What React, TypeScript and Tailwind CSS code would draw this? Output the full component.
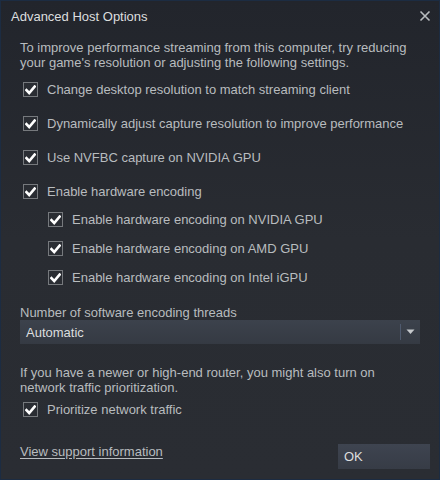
import React from 'react';

const Check = ({ label }: { label: string }) => (
  <div className="flex h-[15px] items-center gap-[9px]">
    <span className="flex h-[15px] w-[15px] shrink-0 items-center justify-center border border-[#76797d] bg-[#2a2d33]">
      <svg width="11" height="10" viewBox="0 0 11 10">
        <path d="M1.5 5.2 L4.2 8 L9.6 1.6" fill="none" stroke="#ffffff" strokeWidth="2.6" strokeLinecap="square" />
      </svg>
    </span>
    <span>{label}</span>
  </div>
);

const App = () => {
  return (
    <div
      className="flex h-[480px] w-[440px] flex-col overflow-hidden border border-[#1c2c42] bg-gradient-to-b from-[#22252c] via-[#292c32] to-[#2a2d33] text-[13px] leading-[15px] text-[#b8bcbf]"
      style={{ fontFamily: '"Liberation Sans", Arial, sans-serif' }}
    >
      <div className="flex h-[30px] shrink-0 items-center justify-between pl-[10px] pr-[8px]">
        <span className="text-[13px] text-[#dcdedf]">Advanced Host Options</span>
        <svg width="12" height="12" viewBox="0 0 12 12">
          <path d="M1.5 1.5 L10.5 10.5 M10.5 1.5 L1.5 10.5" stroke="#b8bcbf" strokeWidth="1.6" />
        </svg>
      </div>

      <div className="flex flex-1 flex-col px-[19px] pt-[9px]">
        <p>
          To improve performance streaming from this computer, try reducing your game's resolution or adjusting the
          following settings.
        </p>

        <div className="mt-[12px] flex flex-col gap-[19px] pl-[3px]">
          <Check label="Change desktop resolution to match streaming client" />
          <Check label="Dynamically adjust capture resolution to improve performance" />
          <Check label="Use NVFBC capture on NVIDIA GPU" />
          <Check label="Enable hardware encoding" />
        </div>

        <div className="mt-[13px] flex flex-col gap-[14px] pl-[28px]">
          <Check label="Enable hardware encoding on NVIDIA GPU" />
          <Check label="Enable hardware encoding on AMD GPU" />
          <Check label="Enable hardware encoding on Intel iGPU" />
        </div>

        <div className="mt-[20px]">Number of software encoding threads</div>
        <div className="flex h-[24px] shrink-0 items-center justify-between bg-gradient-to-b from-[#3c424c] to-[#353a43] pl-[6px]">
          <span className="text-[#dcdedf]">Automatic</span>
          <div className="flex h-full items-center">
            <span className="h-[16px] w-px bg-[#4f5a6e]" />
            <svg className="mx-[5px]" width="9" height="6" viewBox="0 0 9 6">
              <path d="M0.5 0.5 L8.5 0.5 L4.5 5 Z" fill="#c6c9cc" />
            </svg>
          </div>
        </div>

        <p className="mt-[21px]">
          If you have a newer or high-end router, you might also turn on network traffic prioritization.
        </p>
        <div className="mt-[7px] pl-[3px]">
          <Check label="Prioritize network traffic" />
        </div>

        <div className="mt-[27px] flex items-start justify-between">
          <span className="underline underline-offset-2">View support information</span>
          <button className="mr-[-10px] h-[25px] w-[92px] bg-gradient-to-b from-[#3e4450] to-[#373c46] pl-[6px] text-left text-[#dcdedf]">
            OK
          </button>
        </div>
      </div>
    </div>
  );
};

export default App;
